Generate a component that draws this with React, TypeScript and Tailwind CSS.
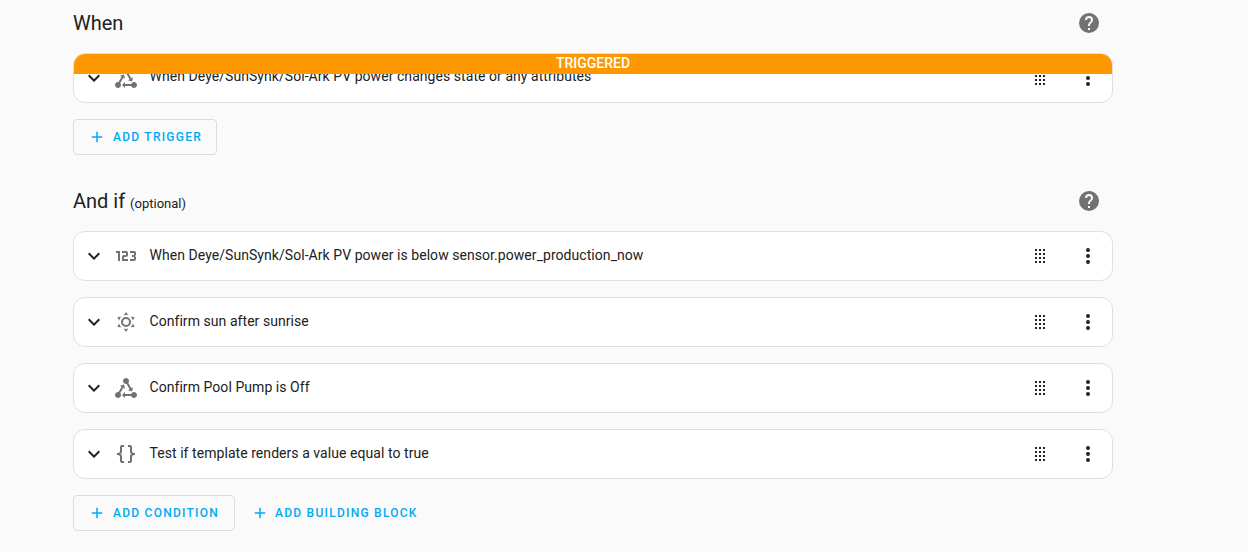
const ICONS = {
  help: 'M15.07,11.25L14.17,12.17C13.45,12.89 13,13.5 13,15H11V14.5C11,13.39 11.45,12.39 12.17,11.67L13.41,10.41C13.78,10.05 14,9.55 14,9C14,7.89 13.1,7 12,7A2,2 0 0,0 10,9H8A4,4 0 0,1 12,5A4,4 0 0,1 16,9C16,9.88 15.64,10.67 15.07,11.25M13,19H11V17H13M12,2A10,10 0 0,0 2,12A10,10 0 0,0 12,22A10,10 0 0,0 22,12C22,6.47 17.5,2 12,2Z',
  dots: 'M12,16A2,2 0 0,1 14,18A2,2 0 0,1 12,20A2,2 0 0,1 10,18A2,2 0 0,1 12,16M12,10A2,2 0 0,1 14,12A2,2 0 0,1 12,14A2,2 0 0,1 10,12A2,2 0 0,1 12,10M12,4A2,2 0 0,1 14,6A2,2 0 0,1 12,8A2,2 0 0,1 10,6A2,2 0 0,1 12,4Z',
  chevron: 'M7.41,8.58L12,13.17L16.59,8.58L18,10L12,16L6,10L7.41,8.58Z',
  plus: 'M19,13H13V19H11V13H5V11H11V5H13V11H19V13Z',
  drag: 'M7,19V17H9V19H7M11,19V17H13V19H11M15,19V17H17V19H15M7,15V13H9V15H7M11,15V13H13V15H11M15,15V13H17V15H15M7,11V9H9V11H7M11,11V9H13V11H11M15,11V9H17V11H15M7,7V5H9V7H7M11,7V5H13V7H11M15,7V5H17V7H15Z',
  numeric: 'M4,17V9H2V7H6V17H4M22,15C22,16.11 21.1,17 20,17H16V15H20V13H18V11H20V9H16V7H20A2,2 0 0,1 22,9V10.5A1.5,1.5 0 0,1 20.5,12A1.5,1.5 0 0,1 22,13.5V15M14,15V17H8V13C8,11.89 8.9,11 10,11H12V9H8V7H12A2,2 0 0,1 14,9V11C14,12.11 13.1,13 12,13H10V15H14Z',
  braces: 'M8,3A2,2 0 0,0 6,5V9A2,2 0 0,1 4,11H3V13H4A2,2 0 0,1 6,15V19A2,2 0 0,0 8,21H10V19H8V14A2,2 0 0,0 6,12A2,2 0 0,0 8,10V5H10V3M16,3A2,2 0 0,1 18,5V9A2,2 0 0,0 20,11H21V13H20A2,2 0 0,0 18,15V19A2,2 0 0,1 16,21H14V19H16V14A2,2 0 0,1 18,12A2,2 0 0,1 16,10V5H14V3H16Z',
  sun: 'M12,7A5,5 0 0,1 17,12A5,5 0 0,1 12,17A5,5 0 0,1 7,12A5,5 0 0,1 12,7M12,9A3,3 0 0,0 9,12A3,3 0 0,0 12,15A3,3 0 0,0 15,12A3,3 0 0,0 12,9M12,2L14.39,5.42C13.65,5.15 12.84,5 12,5C11.16,5 10.35,5.15 9.61,5.42L12,2M3.34,7L7.5,6.65C6.9,7.16 6.36,7.78 5.94,8.5C5.5,9.24 5.25,10 5.11,10.79L3.34,7M3.36,17L5.12,13.23C5.26,14 5.53,14.78 5.95,15.5C6.37,16.24 6.91,16.86 7.5,17.37L3.36,17M20.65,7L18.88,10.79C18.74,10 18.47,9.23 18.05,8.5C17.63,7.78 17.1,7.15 16.5,6.64L20.65,7M20.64,17L16.5,17.36C17.09,16.85 17.62,16.22 18.04,15.5C18.46,14.77 18.73,14 18.87,13.21L20.64,17M12,22L9.59,18.56C10.33,18.83 11.14,19 12,19C12.82,19 13.63,18.83 14.37,18.56L12,22Z',
  machine: 'M6.27 17.05C6.72 17.58 7 18.25 7 19C7 20.66 5.66 22 4 22S1 20.66 1 19 2.34 16 4 16C4.18 16 4.36 16 4.53 16.05L7.6 10.69L5.86 9.7L9.95 8.58L11.07 12.67L9.33 11.68L6.27 17.05M20 16C18.7 16 17.6 16.84 17.18 18H11V16L8 19L11 22V20H17.18C17.6 21.16 18.7 22 20 22C21.66 22 23 20.66 23 19S21.66 16 20 16M12 8C12.18 8 12.36 8 12.53 7.95L15.6 13.31L13.86 14.3L17.95 15.42L19.07 11.33L17.33 12.32L14.27 6.95C14.72 6.42 15 5.75 15 5C15 3.34 13.66 2 12 2S9 3.34 9 5 10.34 8 12 8Z',
};

function Icon({ d, className }: { d: string; className: string }) {
  return (
    <svg viewBox="0 0 24 24" className={className} fill="currentColor">
      <path d={d} />
    </svg>
  );
}

function Row({ icon, label, triggered }: { icon: string; label: string; triggered?: boolean }) {
  return (
    <div className="relative h-[50px] rounded-xl border border-[#e0e0e0] bg-white overflow-hidden">
      <div className="flex items-center h-full pl-2 pr-[12px]">
        <Icon d={ICONS.chevron} className="w-6 h-6 text-[#212121] shrink-0" />
        <Icon d={icon} className="w-6 h-6 ml-[8px] text-[#727272] shrink-0" />
        <span
          className={`ml-[11.5px] text-sm text-[#212121] tracking-[0.055px] flex-1 ${
            triggered ? '-translate-y-[2px]' : '-translate-y-px'
          }`}
        >
          {label}
        </span>
        <Icon d={ICONS.drag} className="w-6 h-6 text-[#212121] shrink-0" />
        <Icon d={ICONS.dots} className="w-6 h-6 ml-6 text-[#212121] shrink-0" />
      </div>
      {/* banner sits over the row, hides the top of the label */}
      {triggered && (
        <div className="absolute top-0 left-0 right-0 h-5 bg-[#ff9800] text-white text-center text-sm font-medium leading-[18px]">
          TRIGGERED
        </div>
      )}
    </div>
  );
}

function AddButton({ label, outlined, width }: { label: string; outlined?: boolean; width?: string }) {
  return (
    <button
      className={`h-9 flex items-center rounded text-[#03a9f4] text-xs font-medium tracking-[1.25px] ${
        outlined ? 'border border-[#dcdcdc] pl-4' : 'pl-[18px]'
      } ${width ?? ''}`}
    >
      <Icon d={ICONS.plus} className={`w-[18px] h-[18px] -ml-[2px] ${outlined ? 'mr-[7px]' : 'mr-[6px]'}`} />
      {label}
    </button>
  );
}

export default function App() {
  return (
    <div className="h-[552px] overflow-hidden bg-[#fafafa] font-['Roboto',sans-serif]">
      <div className="w-[1040px] ml-[73px]">
        <div className="h-[45px] flex items-center justify-between pr-3">
          <h2 className="text-xl text-[#212121]">When</h2>
          <Icon d={ICONS.help} className="w-6 h-6 text-[#727272]" />
        </div>
        <div className="mt-2">
          <Row icon={ICONS.machine} label="When Deye/SunSynk/Sol-Ark PV power changes state or any attributes" triggered />
        </div>
        <div className="mt-4 flex">
          <AddButton label="ADD TRIGGER" outlined width="w-[144px]" />
        </div>
        <div className="mt-[28px] h-[36px] flex items-center justify-between pr-3">
          <h2 className="text-xl text-[#212121]">
            And if <span className="text-[13px]">(optional)</span>
          </h2>
          <Icon d={ICONS.help} className="w-6 h-6 text-[#727272]" />
        </div>
        <div className="mt-3 flex flex-col gap-4">
          <Row icon={ICONS.numeric} label="When Deye/SunSynk/Sol-Ark PV power is below sensor.power_production_now" />
          <Row icon={ICONS.sun} label="Confirm sun after sunrise" />
          <Row icon={ICONS.machine} label="Confirm Pool Pump is Off" />
          <Row icon={ICONS.braces} label="Test if template renders a value equal to true" />
        </div>
        <div className="mt-4 flex">
          <AddButton label="ADD CONDITION" outlined width="w-[162px]" />
          <AddButton label="ADD BUILDING BLOCK" width="w-[198px]" />
        </div>
      </div>
    </div>
  );
}
